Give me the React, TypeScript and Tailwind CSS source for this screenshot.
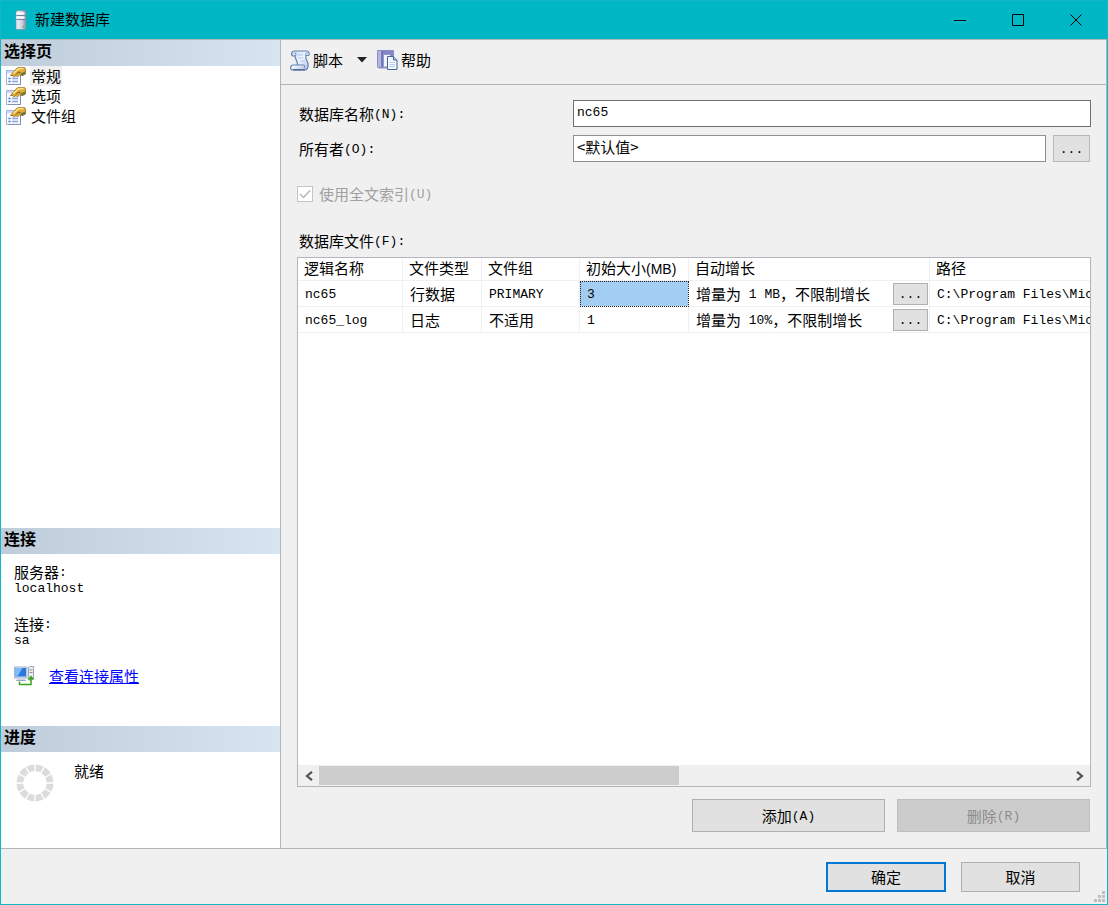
import { useState } from "react";
import type { ReactNode } from "react";

const pages = ["常规", "选项", "文件组"];

const files = [
  {
    name: "nc65",
    type: "行数据",
    group: <Latin>PRIMARY</Latin>,
    size: "3",
    growth: <>增量为<Latin> 1 MB</Latin>，不限制增长</>,
    path: "C:\\Program Files\\Micr",
    selected: true,
  },
  {
    name: "nc65_log",
    type: "日志",
    group: "不适用",
    size: "1",
    growth: <>增量为<Latin> 10%</Latin>，不限制增长</>,
    path: "C:\\Program Files\\Micr",
    selected: false,
  },
];

function Latin({ children }: { children: ReactNode }) {
  return <span className="align-[2px] font-['Liberation_Mono',monospace] text-[13px] leading-none whitespace-pre">{children}</span>;
}

const ServerIcon = () => (
  <svg width="12" height="20" viewBox="0 0 12 20">
    <defs>
      <linearGradient id="srv" x1="0" x2="1">
        <stop offset="0" stopColor="#eef2f8" />
        <stop offset="0.6" stopColor="#ccd4e4" />
        <stop offset="1" stopColor="#7f8ca8" />
      </linearGradient>
    </defs>
    <path d="M1 1.500 3 .5h7l1 1v17l-1 1H2l-1-1z" fill="url(#srv)" stroke="#8490a8" strokeWidth=".7" />
    <path d="M1.500 3.500h8M1.500 7.500h8" stroke="#fff" strokeWidth="2" />
    <path d="M1.500 5.500h9M1.500 9.500h9" stroke="#7282a0" />
    <rect x="7.500" y="16" width="2" height="1.500" fill="#58c33c" />
  </svg>
);

const PageIcon = () => (
  <svg width="20" height="18" viewBox="0 0 20 18">
    <rect x=".5" y="3.500" width="14" height="14" fill="#f5f8ff" stroke="#a9b5da" />
    <path d="M14.500 8v9.500H2" fill="none" stroke="#8290b4" />
    <path d="M1 5h6" stroke="#cbd7f2" strokeWidth="2" />
    <path d="M2.500 11.500h2M2.500 14.500h2" stroke="#4f6cc4" strokeWidth="1.500" />
    <path d="M6 11.500h6M6 14.500h6" stroke="#8ba3dc" strokeWidth="1.500" />
    <path d="M4.500 8.500 10.500 1.500l2-1h6l1 1.500v5l-3.500 1.500-2.500-1-2 2.500-1.500-1.500-2 1.500-1-1.500z" fill="#e3ae35" stroke="#8c6b24" strokeWidth=".8" />
    <path d="m7.500 6.500 4-4 2-1h4" stroke="#ffe48a" strokeWidth="1.500" fill="none" />
    <path d="m10 7.500 2.500-2.500 2 .5" stroke="#6e5014" fill="none" />
    <path d="m14.500 6.500 4.500-2v3l-3 1.500z" fill="#72763c" />
  </svg>
);

const ScriptIcon = () => (
  <svg width="21" height="21" viewBox="0 0 21 21">
    <defs>
      <linearGradient id="scr" x1="0" y1="0" x2="1" y2="1">
        <stop offset="0" stopColor="#c3d5ef" />
        <stop offset="0.5" stopColor="#f0f6ff" />
        <stop offset="1" stopColor="#a3badf" />
      </linearGradient>
    </defs>
    <path
      d="M4 1h12.500c2.500 0 3.500 3 2 4.500h-2.500c-1 3 1.500 5.500 2 8.500.8 3.500-1 6-3.500 6H2.500c-2.500 0-2.500-4.500 0-5H7.500C8 11.500 5 9 5 6H3C.5 5 1.500 1 4 1z"
      fill="url(#scr)"
      stroke="#6482b4"
      strokeWidth="1.200"
    />
    <path d="M5 6c1.500-.5 1.500-3-.5-3M16 5.500c-1-1.500 0-3 1.500-2.500M7.500 15h6c1.500 0 1.500 2 .5 3" fill="none" stroke="#6482b4" />
    <path d="M8 5h5M8.500 8h5M10 11h5" stroke="#b4c8e8" />
    <path d="M3 19.800h12" stroke="#3c5a8c" strokeWidth="1.200" />
  </svg>
);

const HelpIcon = () => (
  <svg width="21" height="20" viewBox="0 0 21 20">
    <path d="M.5.5h16v17.500H2l-1.500-1z" fill="#8585c8" stroke="#8a8cc6" />
    <path d="M1 1h3.500v16H1z" fill="#b4b5e0" />
    <path d="M5 1v16" stroke="#5a5ca6" />
    <path d="M6.500 4.500h6l2 2v10.500h-8z" fill="#eef3fd" stroke="#8fa0c6" />
    <path d="M10.500 6.500h6l3.500 3.500v9.500h-9.500z" fill="#f4f9ff" stroke="#45639a" />
    <path d="M16.500 6.500V10H20" fill="#b9d0ef" stroke="#45639a" />
    <path d="M12.500 12.500h5.500M12.500 14.500h5.500M12.500 16.500h5.500" stroke="#b4cae8" />
  </svg>
);

const ConnectionIcon = () => (
  <svg width="21" height="20" viewBox="0 0 21 20">
    <path d="M14.500 1.500 16 .5h3.500v12L18 14h-3.500z" fill="#e9ecf2" stroke="#a0a9b9" />
    <path d="M15.500 4h3M15.500 6.500h3" stroke="#8895ab" />
    <rect x=".5" y="1" width="12.500" height="11" fill="#d3deee" stroke="#a9b6cc" />
    <rect x="1.500" y="2" width="10.500" height="8.500" fill="#2a78dc" />
    <path d="M1.500 2h7L3.500 10.500h-2z" fill="#7cbcf8" />
    <path d="M3 13.500h8l1.500 1.500H1.500z" fill="#9aa8bd" />
    <path d="M5.500 15.500v3h11.500V12" fill="none" stroke="#3aa51c" strokeWidth="1.500" />
    <path d="m13.500 13.500 3.500-4 3.500 4z" fill="#3aa51c" />
  </svg>
);

const Spinner = () => (
  <svg width="38" height="38" viewBox="0 0 38 38">
    {Array.from({ length: 12 }).map((_, i) => (
      <path key={i} d="M14.900 1Q19-.1 23.100 1L21.400 7.600Q19 7 16.600 7.600z" fill="#dcdcdc" transform={`rotate(${i * 30 + 15} 19 19)`} />
    ))}
  </svg>
);

function SectionHeader({ children }: { children: ReactNode }) {
  return (
    <h2 className="h-[26px] shrink-0 bg-gradient-to-r from-[#bfccda] to-[#d7e4f2] pl-[3px] text-[16px] leading-[21px] font-bold">
      {children}
    </h2>
  );
}

function Sidebar() {
  return (
    <aside className="flex w-[280px] shrink-0 flex-col border-r border-[#b4b4ba] bg-white">
      <SectionHeader>选择页</SectionHeader>
      <ul className="flex-1 pl-[5px]">
        {pages.map((page, i) => (
          <li key={page}>
            <button className="flex h-5 items-center gap-1">
              <PageIcon />
              <span className={i === 0 ? "bg-[#f0f0f0] px-px" : "px-px"}>{page}</span>
            </button>
          </li>
        ))}
      </ul>

      <SectionHeader>连接</SectionHeader>
      <div className="h-[172px] px-[13px] pt-[10px] leading-[16px]">
        <p>服务器<Latin>:</Latin></p>
        <p className="h-4 leading-none"><Latin>localhost</Latin></p>
        <p className="mt-5">连接<Latin>:</Latin></p>
        <p className="h-4 leading-none"><Latin>sa</Latin></p>
        <div className="mt-4 flex h-6 items-center gap-[14px]">
          <ConnectionIcon />
          <a href="#" className="text-[#0000ff] underline">查看连接属性</a>
        </div>
      </div>

      <SectionHeader>进度</SectionHeader>
      <div className="flex h-24 gap-5 px-[15px] pt-3">
        <Spinner />
        <p className="leading-[13px]">就绪</p>
      </div>
    </aside>
  );
}

function FileTable() {
  return (
    <div className="mt-2 flex flex-1 flex-col border border-[#b4b4ba] bg-white">
      <div className="flex-1 overflow-hidden">
        <table className="w-[1000px] table-fixed border-separate border-spacing-0 text-left whitespace-nowrap">
          <colgroup>
            <col className="w-[105px]" />
            <col className="w-[79px]" />
            <col className="w-[98px]" />
            <col className="w-[109px]" />
            <col className="w-[241px]" />
            <col />
          </colgroup>
          <thead>
            <tr className="h-[23px] *:border-r *:border-b *:border-[#f0f0f0] *:p-0 *:pb-[2px] *:pl-[6px] *:font-normal *:leading-[20px]">
              <th>逻辑名称</th>
              <th>文件类型</th>
              <th>文件组</th>
              <th>初始大小<span className="font-['Liberation_Sans',sans-serif] text-[14px] leading-none">(MB)</span></th>
              <th>自动增长</th>
              <th>路径</th>
            </tr>
          </thead>
          <tbody>
            {files.map((file) => (
              <tr key={file.name} className="h-[26px] *:h-[26px] *:border-r *:border-b *:border-[#f0f0f0] *:p-0 *:pl-[7px] *:leading-[22px]">
                <td><Latin>{file.name}</Latin></td>
                <td>{file.type}</td>
                <td>{file.group}</td>
                <td className={file.selected ? "bg-[#a4cef1] outline-1 -outline-offset-1 outline-dotted outline-[#222]" : ""}>
                  <Latin>{file.size}</Latin>
                </td>
                <td>
                  <div className="flex items-center justify-between pr-px">
                    <span>{file.growth}</span>
                    <button className="h-[22px] w-[35px] border border-[#b0b0b0] bg-[#e1e1e1] leading-[20px]">
                      <Latin>...</Latin>
                    </button>
                  </div>
                </td>
                <td><Latin>{file.path}</Latin></td>
              </tr>
            ))}
          </tbody>
        </table>
      </div>

      {/* horizontal scrollbar */}
      <div className="flex h-[21px] bg-[#f0f0f0]">
        <button aria-label="向左滚动" className="flex w-[21px] items-center justify-center">
          <svg width="8" height="10" viewBox="0 0 8 10">
            <path d="M7 .8 2 5l5 4.200" fill="none" stroke="#555" strokeWidth="2.200" />
          </svg>
        </button>
        <div className="flex-1 py-px">
          <div className="h-full w-[48%] bg-[#cdcdcd]" />
        </div>
        <button aria-label="向右滚动" className="flex w-[21px] items-center justify-center">
          <svg width="8" height="10" viewBox="0 0 8 10">
            <path d="m1 .8 5 4.200-5 4.200" fill="none" stroke="#555" strokeWidth="2.200" />
          </svg>
        </button>
      </div>
    </div>
  );
}

function GeneralPage() {
  const [name, setName] = useState("nc65");
  const [owner, setOwner] = useState("<默认值>");

  return (
    <form className="flex flex-1 flex-col pt-[15px] pr-[15px] pb-4 pl-4" onSubmit={(e) => e.preventDefault()}>
      <div className="flex items-center">
        <label htmlFor="db-name" className="w-[276px] shrink-0 pl-[2px]">数据库名称<Latin>(N):</Latin></label>
        <input
          id="db-name"
          value={name}
          onChange={(e) => setName(e.target.value)}
          className="h-[27px] min-w-0 flex-1 border border-[#707070] bg-white px-[3px] pb-[3px] font-['Liberation_Mono',monospace] text-[13px]"
        />
      </div>
      <div className="mt-2 flex items-center pr-px">
        <label htmlFor="db-owner" className="w-[276px] shrink-0 pl-[2px]">所有者<Latin>(O):</Latin></label>
        <input
          id="db-owner"
          value={owner}
          onChange={(e) => setOwner(e.target.value)}
          className="h-[27px] min-w-0 flex-1 border border-[#909090] bg-white px-[3px] pb-[5px]"
        />
        <button className="ml-[7px] h-[27px] w-[37px] border border-[#b8b8b8] bg-[#e1e1e1]">
          <Latin>...</Latin>
        </button>
      </div>

      <label className="mt-6 flex h-4 items-center gap-[6px] text-[#a0a0a0]">
        <span className="grid size-4 place-items-center">
          <input type="checkbox" checked disabled readOnly className="col-start-1 row-start-1 size-4 appearance-none border border-[#c4c4c4] bg-white" />
          <svg className="col-start-1 row-start-1" width="12" height="10" viewBox="0 0 12 10">
            <path d="m1 5 3.500 3.500L11 1.500" fill="none" stroke="#b4b4b4" strokeWidth="1.400" />
          </svg>
        </span>
        <span>使用全文索引<Latin>(U)</Latin></span>
      </label>

      <h3 className="mt-[31px] h-4 pl-[2px] leading-[16px]">数据库文件<Latin>(F):</Latin></h3>
      <FileTable />

      <div className="mt-3 flex justify-end gap-3 pr-px">
        <button className="h-[33px] w-[193px] border border-[#b0b0b0] bg-[#e1e1e1]">添加<Latin>(A)</Latin></button>
        <button disabled className="h-[33px] w-[193px] border border-[#bfbfbf] bg-[#cccccc] text-[#8c8c8c]">删除<Latin>(R)</Latin></button>
      </div>
    </form>
  );
}

function TitleBar() {
  return (
    <header className="flex h-[38px] shrink-0 items-center bg-[#00b7c5] pr-[2px] pl-[14px]">
      <ServerIcon />
      <h1 className="ml-2 flex-1 pb-[2px]">新建数据库</h1>
      <div className="flex h-full *:flex *:w-[58px] *:items-center *:justify-center">
        <button aria-label="最小化">
          <svg width="12" height="12"><path d="M0 6.500h12" stroke="#000" /></svg>
        </button>
        <button aria-label="最大化">
          <svg width="12" height="12"><path d="M.5.5h11v11H.5z" fill="none" stroke="#000" /></svg>
        </button>
        <button aria-label="关闭">
          <svg width="12" height="12"><path d="m.5.5 11 11m0-11-11 11" stroke="#000" /></svg>
        </button>
      </div>
    </header>
  );
}

export default function App() {
  return (
    <div className="flex min-h-screen flex-col border border-[#10b8c6] bg-[#f0f0f0] font-['Noto_Sans_CJK_SC',sans-serif] text-[15px] leading-[20px] text-black">
      <TitleBar />
      <main className="flex flex-1 border-y border-r border-[#b4b4ba]">
        <Sidebar />
        <section className="flex min-w-0 flex-1 flex-col">
          <div className="flex h-[45px] items-center border-b border-[#b4b4ba] pb-1 pl-[9px]">
            <button className="flex items-center gap-[2px]">
              <ScriptIcon />
              脚本
              <svg className="ml-3" width="10" height="6"><path d="M0 0h10L5 5.500z" fill="#222" /></svg>
            </button>
            <button className="ml-[10px] flex items-center gap-[3px]">
              <HelpIcon />
              帮助
            </button>
          </div>
          <GeneralPage />
        </section>
      </main>

      <footer className="relative flex h-[55px] shrink-0 items-center justify-end gap-[15px] pr-[27px]">
        <button className="h-[30px] w-[120px] border-2 border-[#0078d7] bg-[#e1e1e1]">确定</button>
        <button className="h-[30px] w-[119px] border border-[#b0b0b0] bg-[#e1e1e1]">取消</button>
        <svg className="absolute right-[2px] bottom-[2px]" width="11" height="11" viewBox="0 0 11 11" fill="#bfbfbf">
          <path d="M8 0h3v3H8zM4 4h3v3H4zM8 4h3v3H8zM0 8h3v3H0zM4 8h3v3H4zM8 8h3v3H8z" />
        </svg>
      </footer>
    </div>
  );
}
